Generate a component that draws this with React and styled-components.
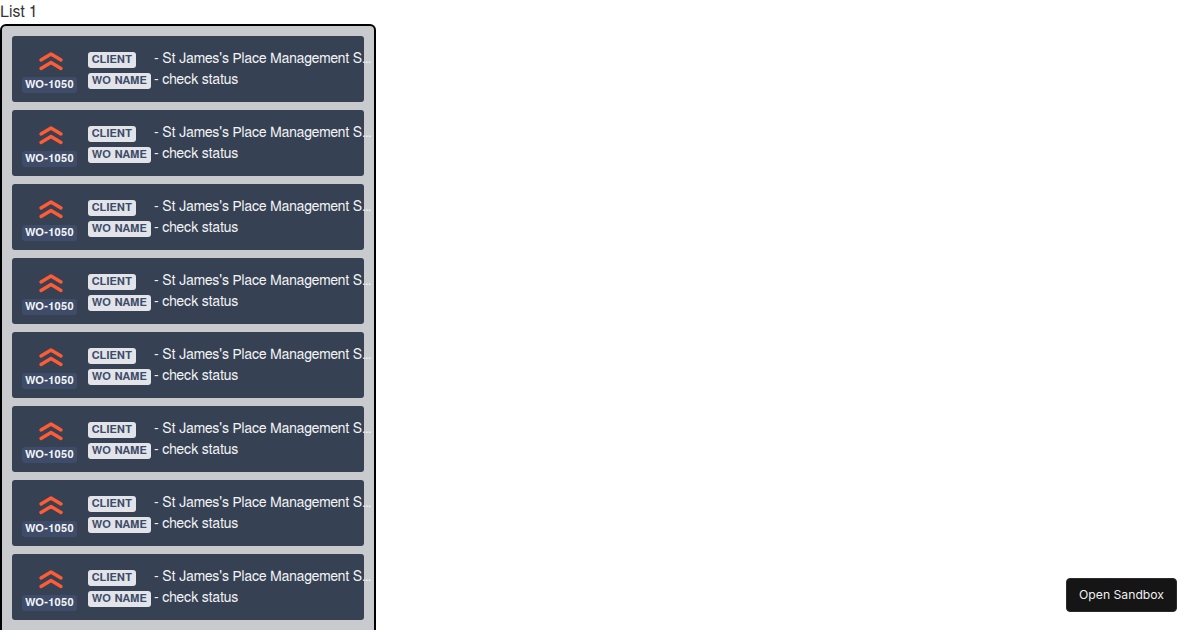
import React from 'react';
import styled, { createGlobalStyle } from 'styled-components';

const GlobalStyle = createGlobalStyle`
  html, body {
    margin: 0;
    padding: 0;
    background: #fff;
    font-family: FreeSans, "Liberation Sans", Arial, sans-serif;
    overflow: hidden;
  }
`

const Title = styled.div`
  font-size: 16px;
  line-height: 24px;
  height: 24px;
  color: #333;
`

const ListBox = styled.div`
  box-sizing: border-box;
  width: 376px;
  background: #c9cace;
  border: 2px solid #000;
  border-radius: 6px;
  padding: 10px 10px 24px 10px;
  display: flex;
  flex-direction: column;
  gap: 8px;
`

const Card = styled.div`
  box-sizing: border-box;
  width: 352px;
  height: 66px;
  background: #364153;
  border-radius: 3px;
  display: flex;
  align-items: center;
  padding-left: 10px;
  gap: 11px;
`

const Priority = styled.div`
  width: 55px;
  display: flex;
  flex-direction: column;
  align-items: center;
  gap: 5px;
  padding-top: 6px;
  svg {
    margin-left: 3px;
  }
`

const Badge = styled.span`
  font-size: 11px;
  font-weight: 700;
  letter-spacing: 0.3px;
  line-height: 16px;
  height: 16px;
  padding: ${p => (p.$dark ? '0 3px' : '0 4px')};
  border-radius: 3px;
  white-space: nowrap;
  background: ${p => (p.$dark ? '#3e4c69' : '#e2e4ea')};
  color: ${p => (p.$dark ? '#f4f5f7' : '#3e4c69')};
`

const Details = styled.div`
  display: grid;
  grid-template-columns: auto 218px;
  column-gap: 3px;
  row-gap: 5px;
  align-items: start;
  justify-items: start;
  margin-top: 3px;
`

const Value = styled.span`
  font-size: 14px;
  line-height: 16px;
  margin-top: -1px;
  color: #f2f3f5;
  width: 100%;
  white-space: nowrap;
  overflow: hidden;
  text-overflow: ellipsis;
`

const SandboxButton = styled.button`
  position: fixed;
  right: 23px;
  bottom: 18px;
  width: 111px;
  height: 34px;
  border: 1px solid #2a2a2a;
  border-radius: 4px;
  background: #151515;
  color: #f0f0f0;
  font-family: Inter, sans-serif;
  font-size: 12.2px;
  padding: 0 0 2px;
`

const Chevrons = () => (
  <svg width="26" height="20" viewBox="0 0 26 20" fill="none" stroke="#ff5c35" strokeWidth="3.4" strokeLinecap="round" strokeLinejoin="round">
    <path d="M3 8 L13 2 L23 8" />
    <path d="M3 16.5 L13 10.5 L23 16.5" />
  </svg>
)

const cards = Array.from({ length: 8 }, (_, i) => i)

const App = () => {
  return (<>
    <GlobalStyle />
    <Title>List 1</Title>
    <ListBox>
      {cards.map(i => (
        <Card key={i}>
          <Priority>
            <Chevrons />
            <Badge $dark>WO-1050</Badge>
          </Priority>
          <Details>
            <Badge>CLIENT</Badge>
            <Value>- St James's Place Management Services Ltd</Value>
            <Badge>WO NAME</Badge>
            <Value>- check status</Value>
          </Details>
        </Card>
      ))}
    </ListBox>
    <SandboxButton>Open Sandbox</SandboxButton>
  </>);
}

export default App;
